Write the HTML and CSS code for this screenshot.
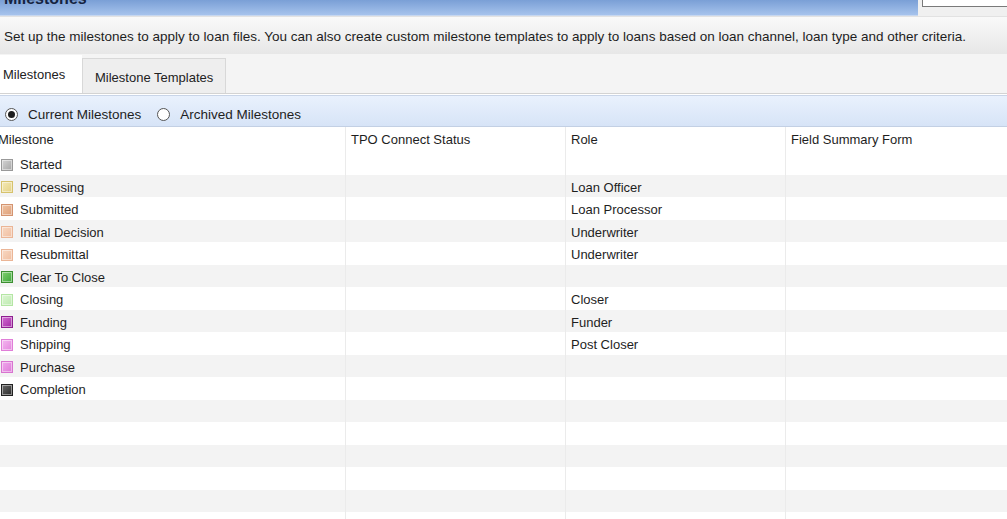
FILE: index.html
```html
<!DOCTYPE html>
<html>
<head>
<meta charset="utf-8">
<link rel="stylesheet" href="styles.css">
</head>
<body>
<div class="page">
  <div class="topbar">
    <div class="title"><span class="title-text">Milestones</span></div>
    <div class="search"><div class="search-box"></div></div>
  </div>
  <div class="desc">Set up the milestones to apply to loan files. You can also create custom milestone templates to apply to loans based on loan channel, loan type and other criteria.</div>
  <div class="tabs">
    <div class="tab active">Milestones</div>
    <div class="tab">Milestone Templates</div>
  </div>
  <div class="radiobar">
    <label class="radio"><span class="dot on"></span>Current Milestones</label>
    <label class="radio"><span class="dot"></span>Archived Milestones</label>
  </div>
  <div class="grid">
    <div class="row head">
      <div class="cell c1 first">Milestone</div>
      <div class="cell c2">TPO Connect Status</div>
      <div class="cell c3">Role</div>
      <div class="cell c4">Field Summary Form</div>
    </div>
    <div class="row"><div class="cell c1 first"><span class="sw sw-started"></span>Started</div><div class="cell c2"></div><div class="cell c3"></div><div class="cell c4"></div></div>
    <div class="row alt"><div class="cell c1 first"><span class="sw sw-processing"></span>Processing</div><div class="cell c2"></div><div class="cell c3">Loan Officer</div><div class="cell c4"></div></div>
    <div class="row"><div class="cell c1 first"><span class="sw sw-submitted"></span>Submitted</div><div class="cell c2"></div><div class="cell c3">Loan Processor</div><div class="cell c4"></div></div>
    <div class="row alt"><div class="cell c1 first"><span class="sw sw-initial"></span>Initial Decision</div><div class="cell c2"></div><div class="cell c3">Underwriter</div><div class="cell c4"></div></div>
    <div class="row"><div class="cell c1 first"><span class="sw sw-resub"></span>Resubmittal</div><div class="cell c2"></div><div class="cell c3">Underwriter</div><div class="cell c4"></div></div>
    <div class="row alt"><div class="cell c1 first"><span class="sw sw-ctc"></span>Clear To Close</div><div class="cell c2"></div><div class="cell c3"></div><div class="cell c4"></div></div>
    <div class="row"><div class="cell c1 first"><span class="sw sw-closing"></span>Closing</div><div class="cell c2"></div><div class="cell c3">Closer</div><div class="cell c4"></div></div>
    <div class="row alt"><div class="cell c1 first"><span class="sw sw-funding"></span>Funding</div><div class="cell c2"></div><div class="cell c3">Funder</div><div class="cell c4"></div></div>
    <div class="row"><div class="cell c1 first"><span class="sw sw-shipping"></span>Shipping</div><div class="cell c2"></div><div class="cell c3">Post Closer</div><div class="cell c4"></div></div>
    <div class="row alt"><div class="cell c1 first"><span class="sw sw-purchase"></span>Purchase</div><div class="cell c2"></div><div class="cell c3"></div><div class="cell c4"></div></div>
    <div class="row"><div class="cell c1 first"><span class="sw sw-completion"></span>Completion</div><div class="cell c2"></div><div class="cell c3"></div><div class="cell c4"></div></div>
    <div class="row alt"><div class="cell c1"></div><div class="cell c2"></div><div class="cell c3"></div><div class="cell c4"></div></div>
    <div class="row"><div class="cell c1"></div><div class="cell c2"></div><div class="cell c3"></div><div class="cell c4"></div></div>
    <div class="row alt"><div class="cell c1"></div><div class="cell c2"></div><div class="cell c3"></div><div class="cell c4"></div></div>
    <div class="row"><div class="cell c1"></div><div class="cell c2"></div><div class="cell c3"></div><div class="cell c4"></div></div>
    <div class="row alt"><div class="cell c1"></div><div class="cell c2"></div><div class="cell c3"></div><div class="cell c4"></div></div>
    <div class="row"><div class="cell c1"></div><div class="cell c2"></div><div class="cell c3"></div><div class="cell c4"></div></div>
  </div>
</div>
</body>
</html>
```

FILE: styles.css
```css
html, body {
  margin: 0;
  padding: 0;
  background: #ffffff;
  overflow: hidden;
}
.page {
  width: 1007px;
  height: 519px;
  overflow: hidden;
  font-family: "Liberation Sans", Arial, sans-serif;
  font-size: 13px;
  color: #1e1e1e;
  background: #ffffff;
}
.topbar {
  display: flex;
  height: 16px;
  background: #f0f0f0;
}
.title {
  flex: 1;
  height: 15px;
  overflow: hidden;
  background: linear-gradient(to bottom, #7a9fd6 0%, #a6c3ec 100%);
  border-bottom: 1px solid #c7d7ef;
  margin-right: 4px;
}
.title-text {
  display: block;
  margin-top: -9px;
  padding-left: 4px;
  font-size: 16px;
  line-height: 15px;
  font-weight: bold;
  color: #15233f;
}
.search {
  width: 85px;
  height: 8px;
  overflow: hidden;
}
.search-box {
  height: 6px;
  background: #ffffff;
  border: 1px solid #7a7a7a;
  border-top: none;
  border-right: none;
}
.desc {
  height: 37px;
  line-height: 40px;
  padding-left: 4px;
  font-size: 13.5px;
  white-space: nowrap;
  background: linear-gradient(to bottom, #f9f9f9 0%, #e7e7e7 100%);
  border-top: 1px solid #e2e2e2;
}
.tabs {
  display: flex;
  align-items: flex-end;
  height: 39px;
  background: #f4f4f4;
  border-bottom: 1px solid #d3d3d3;
}
.tab {
  height: 34px;
  line-height: 38px;
  padding: 0 12px;
  background: #eeeeee;
  border: 1px solid #d8d8d8;
  border-bottom: none;
  color: #222;
}
.tab.active {
  height: 38px;
  line-height: 39px;
  padding: 0 15px 0 3px;
  background: #ffffff;
  border: none;
  width: 64px;
}
.radiobar {
  display: flex;
  align-items: center;
  gap: 16px;
  box-sizing: border-box;
  height: 32px;
  margin-top: 1px;
  padding: 6px 0 0 5px;
  font-size: 13.5px;
  border-top: 1px solid #c9d5e8;
  border-bottom: 1px solid #c3d0e4;
  background: linear-gradient(to bottom, #e9f1fd 0%, #d7e4f7 100%);
}
.radio {
  display: flex;
  align-items: center;
  gap: 10px;
  color: #1e1e1e;
}
.dot {
  box-sizing: border-box;
  width: 13px;
  height: 13px;
  border-radius: 50%;
  border: 1px solid #555;
  background: #ffffff;
  display: flex;
  align-items: center;
  justify-content: center;
}
.dot.on::after {
  content: "";
  width: 7px;
  height: 7px;
  border-radius: 50%;
  background: #1e1e1e;
}
.grid {
  display: flex;
  flex-direction: column;
}
.row {
  display: grid;
  grid-template-columns: 345px 220px 220px 222px;
  height: 22.5px;
  background: #ffffff;
}
.row.alt {
  background: #f3f3f3;
}
.row.head {
  height: 25px;
}
.cell {
  display: flex;
  align-items: center;
  padding-left: 5px;
  padding-top: 3px;
  border-left: 1px solid #ebebeb;
  white-space: nowrap;
  overflow: hidden;
}
.cell.c1 {
  border-left: none;
  padding-left: 0;
}
.row.head .cell {
  align-items: flex-start;
  padding-top: 5px;
}
.row.head .cell.c1 {
  margin-left: -2px;
}
.sw {
  box-sizing: border-box;
  width: 12px;
  height: 12px;
  margin: 0 7px 0 1px;
  border: 1px solid;
  box-shadow: inset 0 0 0 1px rgba(255, 255, 255, 0.45);
  flex: none;
}
.sw-started { background: linear-gradient(135deg, #d4d4d4, #a6a6a6); border-color: #999999; }
.sw-processing { background: linear-gradient(135deg, #f4e9b4, #e4d184); border-color: #d6c26c; }
.sw-submitted { background: linear-gradient(135deg, #f0c3a2, #dea07a); border-color: #d49470; }
.sw-initial { background: linear-gradient(135deg, #f8d8c2, #f0bea0); border-color: #ebb596; }
.sw-resub { background: linear-gradient(135deg, #f8d8c2, #f0bea0); border-color: #ebb596; }
.sw-ctc { background: linear-gradient(135deg, #7fd06e, #3fa83a); border-color: #3c8f30; }
.sw-closing { background: linear-gradient(135deg, #dcf6d2, #bdeab0); border-color: #b4e6a4; }
.sw-funding { background: linear-gradient(135deg, #d36cd3, #a32ca6); border-color: #8e2090; }
.sw-shipping { background: linear-gradient(135deg, #f4b8f0, #e486de); border-color: #e07ed8; }
.sw-purchase { background: linear-gradient(135deg, #f0a8ec, #de7ad8); border-color: #d874d0; }
.sw-completion { background: linear-gradient(135deg, #6a6a6a, #2a2a2a); border-color: #222222; }
```
